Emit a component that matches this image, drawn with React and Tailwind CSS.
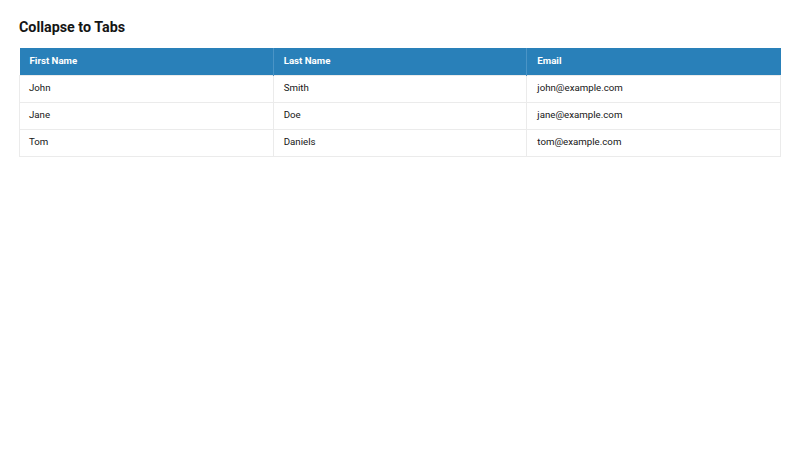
import React from "react";

const rows = [
  { first: "John", last: "Smith", email: "john@example.com" },
  { first: "Jane", last: "Doe", email: "jane@example.com" },
  { first: "Tom", last: "Daniels", email: "tom@example.com" },
];

export default function App() {
  return (
    <div className="min-h-[450px] bg-white px-[19px] pt-[17px] font-['Roboto',sans-serif] text-[#151515]">
      <h1 className="text-[14.3px] font-bold leading-[20px] mb-[11px]">Collapse to Tabs</h1>
      <table className="w-[762px] border-collapse table-fixed text-[9.7px]">
        <thead>
          <tr className="bg-[#2980b9] text-white h-[27px]">
            <th className="text-left font-bold pl-[10px] border-r border-[#4a94c6]">First Name</th>
            <th className="text-left font-bold pl-[10px] border-r border-[#4a94c6]">Last Name</th>
            <th className="text-left font-bold pl-[10px]">Email</th>
          </tr>
        </thead>
        <tbody>
          {rows.map((r) => (
            <tr key={r.email} className="h-[27px]">
              <td className="pl-[9px] border border-[#ebebeb]">{r.first}</td>
              <td className="pl-[10px] border border-[#ebebeb]">{r.last}</td>
              <td className="pl-[10px] border border-[#ebebeb]">{r.email}</td>
            </tr>
          ))}
        </tbody>
      </table>
    </div>
  );
}
